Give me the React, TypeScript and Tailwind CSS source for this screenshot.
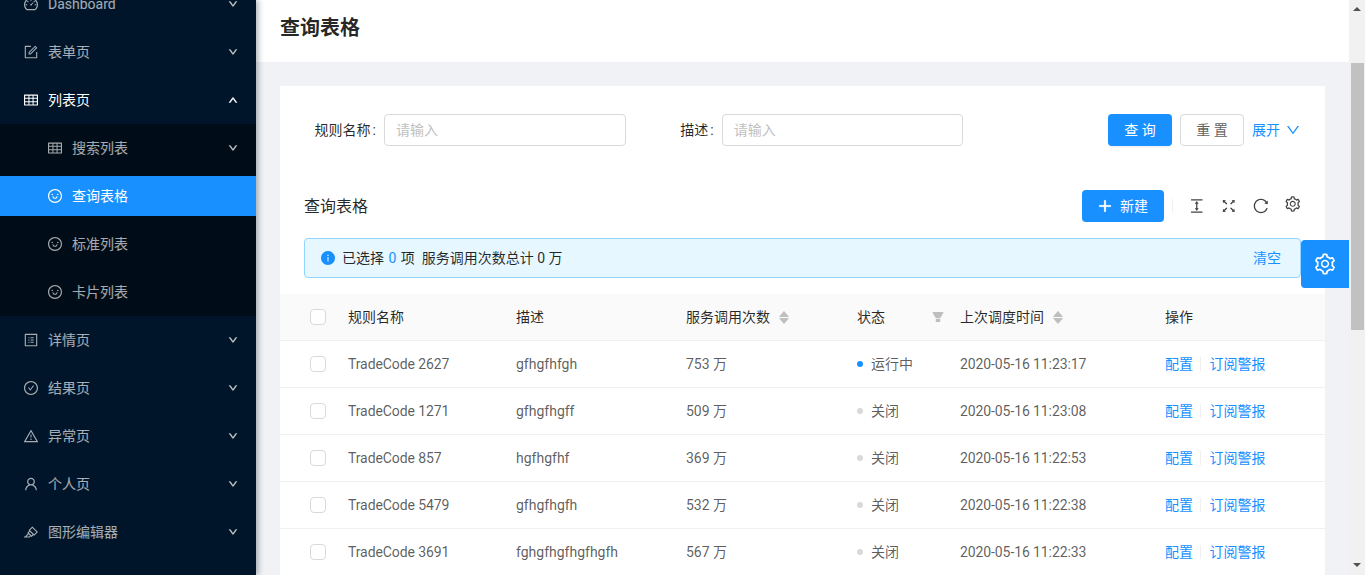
import type { ReactNode } from "react";
import {
  AiFillCaretDown,
  AiFillCaretUp,
  AiFillFilter,
  AiFillInfoCircle,
  AiOutlineCheckCircle,
  AiOutlineColumnHeight,
  AiOutlineDashboard,
  AiOutlineDown,
  AiOutlineForm,
  AiOutlineFullscreen,
  AiOutlineHighlight,
  AiOutlinePlus,
  AiOutlineProfile,
  AiOutlineReload,
  AiOutlineSetting,
  AiOutlineSmile,
  AiOutlineTable,
  AiOutlineUp,
  AiOutlineUser,
  AiOutlineWarning,
} from "react-icons/ai";

const FONT = "font-['Roboto','Noto_Sans_CJK_SC',sans-serif]";
const GRID = "grid grid-cols-[52px_168px_170px_171px_103px_205px_1fr] items-center";

const rows = [
  { name: "TradeCode 2627", desc: "gfhgfhfgh", calls: "753 万", on: true, time: "2020-05-16 11:23:17" },
  { name: "TradeCode 1271", desc: "gfhgfhgff", calls: "509 万", on: false, time: "2020-05-16 11:23:08" },
  { name: "TradeCode 857", desc: "hgfhgfhf", calls: "369 万", on: false, time: "2020-05-16 11:22:53" },
  { name: "TradeCode 5479", desc: "gfhgfhgfh", calls: "532 万", on: false, time: "2020-05-16 11:22:38" },
  { name: "TradeCode 3691", desc: "fghgfhgfhgfhgfh", calls: "567 万", on: false, time: "2020-05-16 11:22:33" },
];

const MenuItem = ({ icon, label, open, active }: { icon: ReactNode; label: string; open?: boolean; active?: boolean }) => (
  <div className={`my-1 flex h-10 items-center pl-6 pr-[18px] text-sm ${active ? "text-white" : "text-white/65"}`}>
    <span className="-ml-px mr-[9px] text-[16px]">{icon}</span>
    <span className="flex-1">{label}</span>
    {open ? <AiOutlineUp className="text-[10px] stroke-[80]" /> : <AiOutlineDown className="text-[10px] stroke-[80]" />}
  </div>
);

const SubItem = ({ icon, label, selected, arrow }: { icon: ReactNode; label: string; selected?: boolean; arrow?: boolean }) => (
  <div
    className={`mb-2 flex h-10 items-center pl-12 pr-[18px] text-sm last:mb-0 ${
      selected ? "bg-[#1890ff] text-white" : "text-white/65"
    }`}
  >
    <span className="-ml-px mr-[9px] text-[16px]">{icon}</span>
    <span className="flex-1">{label}</span>
    {arrow && <AiOutlineDown className="text-[10px] stroke-[80]" />}
  </div>
);

const Sidebar = () => (
  <aside className="z-10 h-[575px] w-[256px] shrink-0 overflow-hidden bg-[#001529] shadow-[2px_0_6px_rgba(0,21,41,0.35)]">
    <div className="-mt-5 flex flex-col">
      <MenuItem icon={<AiOutlineDashboard />} label="Dashboard" />
      <MenuItem icon={<AiOutlineForm />} label="表单页" />
      <MenuItem icon={<AiOutlineTable />} label="列表页" open active />
      <div className="bg-[#000c17] py-1">
        <SubItem icon={<AiOutlineTable />} label="搜索列表" arrow />
        <SubItem icon={<AiOutlineSmile />} label="查询表格" selected />
        <SubItem icon={<AiOutlineSmile />} label="标准列表" />
        <SubItem icon={<AiOutlineSmile />} label="卡片列表" />
      </div>
      <MenuItem icon={<AiOutlineProfile />} label="详情页" />
      <MenuItem icon={<AiOutlineCheckCircle />} label="结果页" />
      <MenuItem icon={<AiOutlineWarning />} label="异常页" />
      <MenuItem icon={<AiOutlineUser />} label="个人页" />
      <MenuItem icon={<AiOutlineHighlight />} label="图形编辑器" />
    </div>
  </aside>
);

const Sorter = () => (
  <span className="ml-[7px] flex flex-col text-[14px] text-[#bfbfbf]">
    <AiFillCaretUp />
    <AiFillCaretDown className="-mt-[7px]" />
  </span>
);

const Checkbox = () => <span className="ml-[30px] block h-4 w-4 rounded-sm border border-[#d9d9d9] bg-white" />;

const SearchField = ({ label }: { label: string }) => (
  <div className="flex items-center">
    <label className="w-20 pr-2 text-right text-sm text-black/85">
      {label}
      <span className="ml-[2px]">:</span>
    </label>
    <input
      placeholder="请输入"
      className="h-8 w-[241.67px] rounded-sm border border-[#d9d9d9] bg-white px-[11px] text-sm placeholder:text-[#bfbfbf]"
    />
  </div>
);

const Table = () => (
  <div className="mt-4">
    <div className={`${GRID} h-[47px] border-b border-[#f0f0f0] bg-[#fafafa] text-sm text-black/85`}>
      <Checkbox />
      <div className="pl-4">规则名称</div>
      <div className="pl-4">描述</div>
      <div className="flex items-center pl-4">
        服务调用次数
        <Sorter />
      </div>
      <div className="flex items-center justify-between pl-4">
        状态
        <AiFillFilter className="-mr-px text-[14px] text-[#bfbfbf]" />
      </div>
      <div className="flex items-center pl-4">
        上次调度时间
        <Sorter />
      </div>
      <div className="pl-4">操作</div>
    </div>
    {rows.map((r) => (
      <div key={r.name} className={`${GRID} h-[47px] border-b border-[#f0f0f0] text-sm text-black/65`}>
        <Checkbox />
        <div className="pl-4 tracking-[-0.1px]">{r.name}</div>
        <div className="pl-4">{r.desc}</div>
        <div className="pl-4">{r.calls}</div>
        <div className="flex items-center pl-4">
          <span className={`mr-2 h-[6px] w-[6px] rounded-full ${r.on ? "bg-[#1890ff]" : "bg-[#d9d9d9]"}`} />
          {r.on ? "运行中" : "关闭"}
        </div>
        <div className="pl-4 tracking-[-0.1px]">{r.time}</div>
        <div className="flex items-center pl-4 text-[#1890ff]">
          配置
          <span className="mx-2 h-[14px] w-px -translate-x-px bg-[#f0f0f0]" />
          <span className="-ml-[0.5px]">订阅警报</span>
        </div>
      </div>
    ))}
  </div>
);

const Scrollbar = () => (
  <div className="flex w-4 shrink-0 flex-col items-center bg-[#f1f1f1] py-[7px]">
    <svg width="8" height="4" viewBox="0 0 8 4" className="shrink-0">
      <path d="M4 0L8 4H0z" fill="#505050" />
    </svg>
    <div className="ml-[1px] mt-[52px] h-[267px] w-[13px] shrink-0 bg-[#c1c1c1]" />
    <svg width="8" height="4" viewBox="0 0 8 4" className="mt-auto shrink-0 -translate-y-[1px]">
      <path d="M4 4L8 0H0z" fill="#505050" />
    </svg>
  </div>
);

export default function App() {
  return (
    <div className={`${FONT} relative flex h-[575px] overflow-hidden bg-[#f0f2f5]`}>
      <Sidebar />
      <main className="flex min-w-0 flex-1 flex-col">
        <div className="flex h-[62px] shrink-0 items-center bg-white pb-[6px] pl-6">
          <h1 className="text-xl font-semibold text-black/85">查询表格</h1>
        </div>
        <div className="mx-6 mt-6 flex-1 bg-white">
          <div className="flex items-center px-6 pt-7">
            <div className="grid flex-1 grid-cols-[337.67px_337.67px]">
              <SearchField label="规则名称" />
              <SearchField label="描述" />
            </div>
            <button className="h-8 w-16 rounded-sm bg-[#1890ff] text-sm text-white shadow-[0_2px_0_rgba(0,0,0,0.045)]">查 询</button>
            <button className="ml-2 h-8 w-16 rounded-sm border border-[#d9d9d9] bg-white text-sm text-black/65">重 置</button>
            <span className="ml-2 flex items-center text-sm text-[#1890ff]">
              展开
              <AiOutlineDown className="ml-[5px] text-[16px]" />
            </span>
          </div>
          <div className="mt-11 flex h-8 items-center px-6">
            <span className="flex-1 pt-[1px] text-base text-black/85">查询表格</span>
            <button className="flex h-8 w-[82px] items-center justify-center rounded-sm bg-[#1890ff] pr-px text-sm text-white">
              <AiOutlinePlus className="mr-[7px] text-[16px] stroke-[50]" />
              新建
            </button>
            <span className="ml-2 h-[14px] w-px bg-[#f0f0f0]" />
            <div className="ml-[15px] flex w-[113px] items-center gap-[14px] text-[18px] text-black/75">
              <AiOutlineColumnHeight />
              <AiOutlineFullscreen />
              <AiOutlineReload className="ml-px" />
              <AiOutlineSetting className="-mt-1" />
            </div>
          </div>
          <div className="mx-6 mt-4 flex h-10 items-center rounded-sm border border-[#91d5ff] bg-[#e6f7ff] pl-[15px] pr-[19px] text-sm text-black/85">
            <AiFillInfoCircle className="mr-[6px] text-[16px] text-[#1890ff]" />
            <span className="flex-1">
              已选择 <span className="mx-px text-[#1890ff]">0</span> 项&nbsp; 服务调用次数总计 0 万
            </span>
            <span className="text-[#1890ff]">清空</span>
          </div>
          <Table />
        </div>
      </main>
      <Scrollbar />
      <div className="absolute right-4 top-[240px] flex h-12 w-12 items-center justify-center rounded-l-[4px] bg-[#1890ff] text-[24px] text-white">
        <AiOutlineSetting />
      </div>
    </div>
  );
}
